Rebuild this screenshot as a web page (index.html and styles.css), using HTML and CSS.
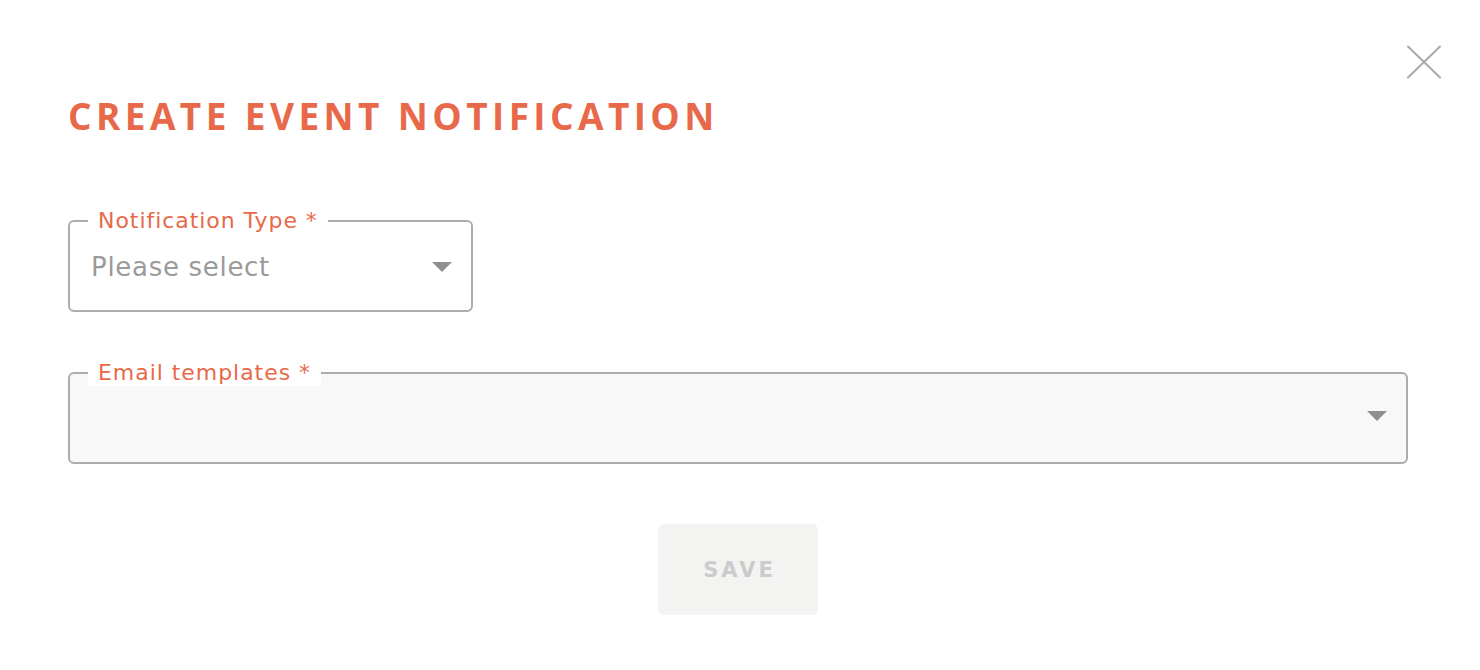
FILE: index.html
```html
<!DOCTYPE html>
<html lang="en">
<head>
<meta charset="utf-8">
<title>Create Event Notification</title>
<link rel="stylesheet" href="styles.css">
</head>
<body>
<div class="dialog">
  <div class="topbar">
    <button class="close" type="button" aria-label="Close">
      <svg width="36" height="34" viewBox="0 0 36 34" aria-hidden="true">
        <path d="M2 1.5 L34 32.5 M34 1.5 L2 32.5" stroke="#a9aba6" stroke-width="2" fill="none" stroke-linecap="round"/>
      </svg>
    </button>
  </div>
  <div class="content">
    <h1 class="title">CREATE EVENT NOTIFICATION</h1>
    <form class="form">
      <fieldset class="field field-type">
        <legend class="field-label">Notification Type *</legend>
        <div class="field-control">
          <span class="placeholder">Please select</span>
          <span class="caret"></span>
        </div>
      </fieldset>
      <fieldset class="field field-templates">
        <legend class="field-label field-label-filled">Email templates *</legend>
        <div class="field-control">
          <span class="placeholder"></span>
          <span class="caret"></span>
        </div>
      </fieldset>
      <div class="actions">
        <button class="save" type="button" disabled>SAVE</button>
      </div>
    </form>
  </div>
</div>
</body>
</html>
```

FILE: styles.css
```css
html, body {
  margin: 0;
  padding: 0;
  background: #ffffff;
}

body {
  font-family: "DejaVu Sans", "Open Sans", sans-serif;
  color: #333;
}

.dialog {
  width: 1480px;
  height: 670px;
  display: flex;
  flex-direction: column;
}

.topbar {
  display: flex;
  justify-content: flex-end;
  padding: 45px 38px 0 0;
}

.close {
  display: block;
  width: 36px;
  height: 34px;
  padding: 0;
  margin: 0;
  border: 0;
  background: transparent;
  cursor: pointer;
}

.close svg {
  display: block;
}

.content {
  padding: 0 72px 0 68px;
}

.title {
  margin: 15px 0 0 0;
  font-family: "Open Sans", "DejaVu Sans", sans-serif;
  font-size: 37px;
  line-height: 44px;
  font-weight: 700;
  letter-spacing: 4.4px;
  color: #e8694a;
}

.form {
  display: flex;
  flex-direction: column;
  margin-top: 70px;
}

.field {
  margin: 0;
  border: 2px solid #acacac;
  border-radius: 6px;
  padding: 0 19px 10px 18px;
  min-width: 0;
}

.field-type {
  width: 405px;
  box-sizing: border-box;
}

.field-templates {
  margin-top: 48px;
  background: #f8f8f8;
  padding-bottom: 17px;
}

.field-label {
  padding: 0 10px;
  font-size: 22px;
  line-height: 26px;
  letter-spacing: 0.95px;
  color: #e8694a;
}

.field-label-filled {
  background: #ffffff;
}

.field-control {
  display: flex;
  align-items: center;
  justify-content: space-between;
  height: 66px;
}

.field-templates .field-control {
  height: 59px;
}

.placeholder {
  margin-left: 3px;
  font-size: 26px;
  letter-spacing: 0.7px;
  color: #9a9a9a;
}

.caret {
  width: 0;
  height: 0;
  border-left: 10.5px solid transparent;
  border-right: 10.5px solid transparent;
  border-top: 10px solid #8f8f8f;
}

.actions {
  display: flex;
  justify-content: center;
  margin-top: 60px;
}

.save {
  width: 160px;
  height: 91px;
  border: 0;
  border-radius: 6px;
  background: #f3f3f2;
  font-family: "DejaVu Sans", "Open Sans", sans-serif;
  font-size: 21px;
  font-weight: 700;
  letter-spacing: 3px;
  text-indent: 3px;
  color: #cbcbcb;
  padding: 0;
}
```
